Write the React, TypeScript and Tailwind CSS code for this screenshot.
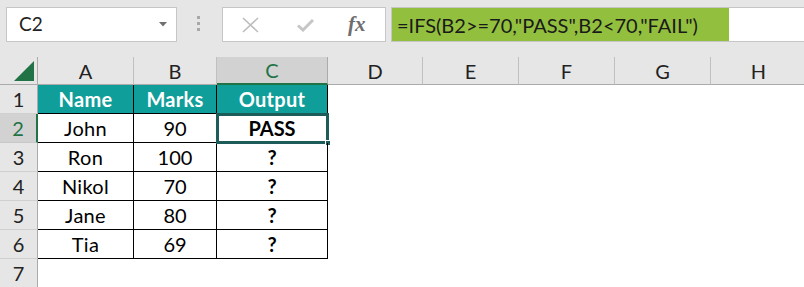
import React from 'react';

const cols = ['A', 'B', 'C', 'D', 'E', 'F', 'G', 'H'];

const rows = [
  { name: 'John', marks: '90', out: 'PASS' },
  { name: 'Ron', marks: '100', out: '?' },
  { name: 'Nikol', marks: '70', out: '?' },
  { name: 'Jane', marks: '80', out: '?' },
  { name: 'Tia', marks: '69', out: '?' },
];

const TopBar: React.FC = () => (
  <div className="h-[57px] bg-[#e6e6e6] flex items-start pt-[7px]">
    <div className="ml-[6px] w-[171px] h-[35px] bg-white border border-[#c6c6c6] flex items-center justify-between pl-[12px] pr-[9px]">
      <span className="text-[19px] text-[#222]">C2</span>
      <svg width="8" height="5" viewBox="0 0 8 5">
        <path d="M0 0 H8 L4 4.5 Z" fill="#707070" />
      </svg>
    </div>
    <div className="ml-[20px] mt-[9px] flex flex-col gap-[3px]">
      <div className="w-[3px] h-[3px] bg-[#a8a8a8]" />
      <div className="w-[3px] h-[3px] bg-[#a8a8a8]" />
      <div className="w-[3px] h-[3px] bg-[#a8a8a8]" />
    </div>
    <div className="ml-[22px] w-[164px] h-[35px] bg-white border border-[#c6c6c6] flex items-center">
      <svg className="ml-[19px]" width="17" height="16" viewBox="0 0 17 16">
        <path d="M1 1 L16 15 M16 1 L1 15" stroke="#bdbdbd" strokeWidth="1.6" fill="none" />
      </svg>
      <svg className="ml-[38px]" width="17" height="14" viewBox="0 0 17 14">
        <path d="M1 7.5 L6 12 L16 2" stroke="#c6c6c6" strokeWidth="3" fill="none" />
      </svg>
      <span className="ml-[34px] font-['Liberation_Serif',serif] italic font-bold text-[21px] text-[#6e6e6e] leading-none">
        fx
      </span>
    </div>
    <div className="ml-[5px] flex-1 h-[35px] bg-white border border-r-0 border-[#c6c6c6] flex">
      <div className="w-[337px] h-full bg-[#92c03e] flex items-center pl-[5px] text-[20px] text-[#1a1a1a] whitespace-nowrap">
        =IFS(B2&gt;=70,"PASS",B2&lt;70,"FAIL")
      </div>
    </div>
  </div>
);

const Corner: React.FC = () => (
  <div className="h-[28px] bg-[#e6e6e6] border-r border-b border-[#ababab] flex items-end justify-end pr-[3px] pb-[3px]">
    <svg width="20" height="20" viewBox="0 0 20 20">
      <path d="M20 0 V20 H0 Z" fill="#217346" />
    </svg>
  </div>
);

const ColHeader: React.FC<{ label: string }> = ({ label }) =>
  label === 'C' ? (
    <div className="h-[28px] bg-[#d2d2d2] border-r border-[#ababab] border-b-2 border-b-[#217346] flex items-center justify-center text-[20px] text-[#217346]">
      {label}
    </div>
  ) : (
    <div className="h-[28px] bg-[#e6e6e6] border-r border-[#c0c0c0] border-b border-b-[#ababab] flex items-center justify-center text-[20px] text-[#222]">
      {label}
    </div>
  );

const RowHeader: React.FC<{ n: number }> = ({ n }) =>
  n === 2 ? (
    <div className="h-[29px] bg-[#d2d2d2] border-r-2 border-r-[#217346] border-b border-[#c8c8c8] flex items-center justify-center text-[20px] text-[#217346]">
      {n}
    </div>
  ) : (
    <div className="h-[29px] bg-[#e6e6e6] border-r border-r-[#ababab] border-b border-[#d0d0d0] flex items-center justify-center text-[20px] text-[#222]">
      {n}
    </div>
  );

const Blank: React.FC = () => <div className="h-[29px] bg-white" />;

export default function App() {
  return (
    <div className="w-[804px] h-[287px] overflow-hidden bg-white font-['Lato',sans-serif]">
      <TopBar />
      <div className="grid grid-cols-[38px_96px_83px_111px_95px_96px_96px_96px_96px]">
        <Corner />
        {cols.map((c) => (
          <ColHeader key={c} label={c} />
        ))}

        <RowHeader n={1} />
        {['Name', 'Marks', 'Output'].map((h) => (
          <div
            key={h}
            className="h-[29px] bg-[#0f9e99] border-r border-b border-black flex items-center justify-center text-[20px] font-bold text-white tracking-[0.3px]"
          >
            {h}
          </div>
        ))}
        {[0, 1, 2, 3, 4].map((i) => (
          <Blank key={i} />
        ))}

        {rows.map((r, i) => (
          <React.Fragment key={r.name}>
            <RowHeader n={i + 2} />
            <div className="h-[29px] border-r border-b border-black flex items-center justify-center text-[20px] text-black tracking-[0.3px]">
              {r.name}
            </div>
            <div className="h-[29px] border-r border-b border-black flex items-center justify-center text-[20px] text-black">
              {r.marks}
            </div>
            <div className="relative h-[29px] border-r border-b border-black flex items-center justify-center text-[20px] font-bold text-black">
              {r.out}
              {i === 0 && (
                <>
                  <div className="absolute left-[-1px] top-[-1px] right-[-2px] bottom-[-2px] border-[3px] border-[#1d5c58]" />
                  <div className="absolute right-[-4px] bottom-[-4px] w-[6px] h-[6px] bg-[#1d5c58] border border-white" />
                </>
              )}
            </div>
            {[0, 1, 2, 3, 4].map((j) => (
              <Blank key={j} />
            ))}
          </React.Fragment>
        ))}

        <RowHeader n={7} />
        {[0, 1, 2, 3, 4, 5, 6, 7].map((j) => (
          <Blank key={j} />
        ))}
      </div>
    </div>
  );
}
